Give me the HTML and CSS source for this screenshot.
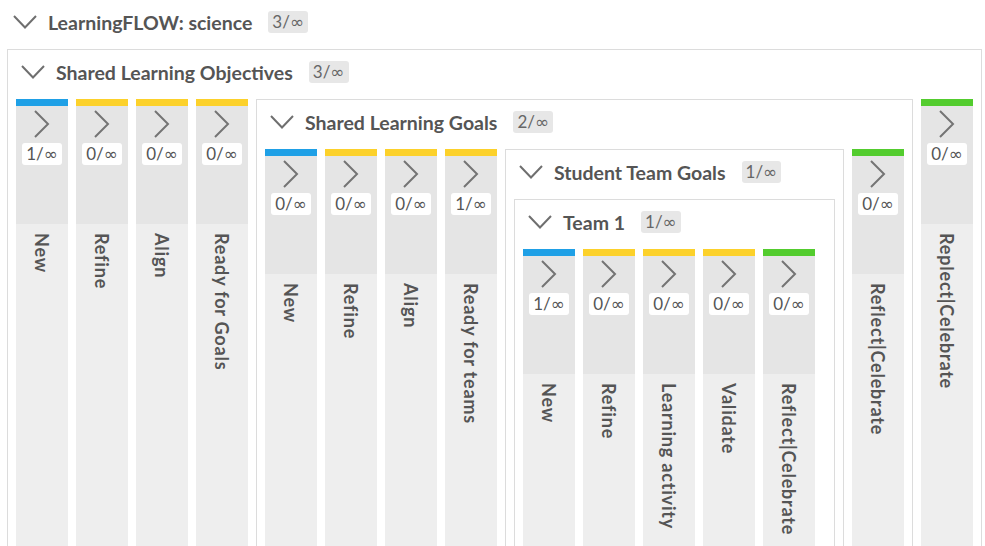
FILE: index.html
```html
<!DOCTYPE html>
<html>
<head>
<meta charset="utf-8">
<link rel="stylesheet" href="styles.css">
</head>
<body>
<div class="hdr top">
  <svg class="down" width="24" height="14" viewBox="0 0 24 14"><polyline points="1,1 12,12.5 23,1"/></svg>
  <span class="title">LearningFLOW: science</span>
  <span class="badge">3/<span class="inf">∞</span></span>
</div>
<div class="box outer">
  <div class="hdr">
    <svg class="down" width="24" height="14" viewBox="0 0 24 14"><polyline points="1,1 12,12.5 23,1"/></svg>
    <span class="title">Shared Learning Objectives</span>
    <span class="badge">3/<span class="inf">∞</span></span>
  </div>
  <div class="row">
    <div class="col"><div class="bar blue"></div><div class="col-top"><svg class="right" width="16" height="28" viewBox="0 0 16 28"><polyline points="1,1 14,14 1,27"/></svg><span class="cbadge">1/<span class="inf">∞</span></span></div><div class="col-label">New</div></div>
    <div class="col"><div class="bar yellow"></div><div class="col-top"><svg class="right" width="16" height="28" viewBox="0 0 16 28"><polyline points="1,1 14,14 1,27"/></svg><span class="cbadge">0/<span class="inf">∞</span></span></div><div class="col-label">Refine</div></div>
    <div class="col"><div class="bar yellow"></div><div class="col-top"><svg class="right" width="16" height="28" viewBox="0 0 16 28"><polyline points="1,1 14,14 1,27"/></svg><span class="cbadge">0/<span class="inf">∞</span></span></div><div class="col-label">Align</div></div>
    <div class="col"><div class="bar yellow"></div><div class="col-top"><svg class="right" width="16" height="28" viewBox="0 0 16 28"><polyline points="1,1 14,14 1,27"/></svg><span class="cbadge">0/<span class="inf">∞</span></span></div><div class="col-label">Ready for Goals</div></div>
    <div class="box">
      <div class="hdr">
        <svg class="down" width="24" height="14" viewBox="0 0 24 14"><polyline points="1,1 12,12.5 23,1"/></svg>
        <span class="title">Shared Learning Goals</span>
        <span class="badge">2/<span class="inf">∞</span></span>
      </div>
      <div class="row">
        <div class="col"><div class="bar blue"></div><div class="col-top"><svg class="right" width="16" height="28" viewBox="0 0 16 28"><polyline points="1,1 14,14 1,27"/></svg><span class="cbadge">0/<span class="inf">∞</span></span></div><div class="col-label">New</div></div>
        <div class="col"><div class="bar yellow"></div><div class="col-top"><svg class="right" width="16" height="28" viewBox="0 0 16 28"><polyline points="1,1 14,14 1,27"/></svg><span class="cbadge">0/<span class="inf">∞</span></span></div><div class="col-label">Refine</div></div>
        <div class="col"><div class="bar yellow"></div><div class="col-top"><svg class="right" width="16" height="28" viewBox="0 0 16 28"><polyline points="1,1 14,14 1,27"/></svg><span class="cbadge">0/<span class="inf">∞</span></span></div><div class="col-label">Align</div></div>
        <div class="col"><div class="bar yellow"></div><div class="col-top"><svg class="right" width="16" height="28" viewBox="0 0 16 28"><polyline points="1,1 14,14 1,27"/></svg><span class="cbadge">1/<span class="inf">∞</span></span></div><div class="col-label">Ready for teams</div></div>
        <div class="box">
          <div class="hdr">
            <svg class="down" width="24" height="14" viewBox="0 0 24 14"><polyline points="1,1 12,12.5 23,1"/></svg>
            <span class="title">Student Team Goals</span>
            <span class="badge">1/<span class="inf">∞</span></span>
          </div>
          <div class="row">
            <div class="box team">
              <div class="hdr">
                <svg class="down" width="24" height="14" viewBox="0 0 24 14"><polyline points="1,1 12,12.5 23,1"/></svg>
                <span class="title">Team 1</span>
                <span class="badge">1/<span class="inf">∞</span></span>
              </div>
              <div class="row">
                <div class="col"><div class="bar blue"></div><div class="col-top"><svg class="right" width="16" height="28" viewBox="0 0 16 28"><polyline points="1,1 14,14 1,27"/></svg><span class="cbadge">1/<span class="inf">∞</span></span></div><div class="col-label">New</div></div>
                <div class="col"><div class="bar yellow"></div><div class="col-top"><svg class="right" width="16" height="28" viewBox="0 0 16 28"><polyline points="1,1 14,14 1,27"/></svg><span class="cbadge">0/<span class="inf">∞</span></span></div><div class="col-label">Refine</div></div>
                <div class="col"><div class="bar yellow"></div><div class="col-top"><svg class="right" width="16" height="28" viewBox="0 0 16 28"><polyline points="1,1 14,14 1,27"/></svg><span class="cbadge">0/<span class="inf">∞</span></span></div><div class="col-label">Learning activity</div></div>
                <div class="col"><div class="bar yellow"></div><div class="col-top"><svg class="right" width="16" height="28" viewBox="0 0 16 28"><polyline points="1,1 14,14 1,27"/></svg><span class="cbadge">0/<span class="inf">∞</span></span></div><div class="col-label">Validate</div></div>
                <div class="col"><div class="bar green"></div><div class="col-top"><svg class="right" width="16" height="28" viewBox="0 0 16 28"><polyline points="1,1 14,14 1,27"/></svg><span class="cbadge">0/<span class="inf">∞</span></span></div><div class="col-label">Reflect|Celebrate</div></div>
              </div>
            </div>
          </div>
        </div>
        <div class="col"><div class="bar green"></div><div class="col-top"><svg class="right" width="16" height="28" viewBox="0 0 16 28"><polyline points="1,1 14,14 1,27"/></svg><span class="cbadge">0/<span class="inf">∞</span></span></div><div class="col-label">Reflect|Celebrate</div></div>
      </div>
    </div>
    <div class="col"><div class="bar green"></div><div class="col-top"><svg class="right" width="16" height="28" viewBox="0 0 16 28"><polyline points="1,1 14,14 1,27"/></svg><span class="cbadge">0/<span class="inf">∞</span></span></div><div class="col-label">Replect|Celebrate</div></div>
  </div>
</div>
</body>
</html>
```
FILE: styles.css
```css
html, body {
  margin: 0;
  padding: 0;
  overflow: hidden;
  background: #fff;
  height: 100%;
}
body {
  font-family: Lato, "Open Sans", sans-serif;
  color: #555;
}
.hdr {
  display: flex;
  align-items: center;
  height: 22px;
  padding: 11px 0 16px 13px;
}
.down {
  flex: none;
  fill: none;
  stroke: #6f6f6f;
  stroke-width: 2;
}
.title {
  margin-left: 11px;
  font-size: 19.5px;
  font-weight: 700;
  color: #555;
  white-space: nowrap;
}
.badge {
  margin-left: 16px;
  height: 22px;
  line-height: 22px;
  padding: 0 4px;
  background: #e7e7e7;
  border-radius: 3px;
  font-size: 17px;
  color: #666;
  white-space: nowrap;
}
.inf {
  font-family: "DejaVu Sans", sans-serif;
  font-size: 17px;
  font-weight: 400;
}
.box {
  display: flex;
  flex-direction: column;
  border: 1px solid #dcdcdc;
  border-bottom: none;
  background: #fff;
}
.outer {
  display: inline-flex;
  margin-left: 7px;
  min-height: 600px;
}
.row {
  flex: 1;
  display: flex;
  gap: 8px;
  padding: 0 8px;
}
.team {
  padding-right: 11px;
}
.col {
  width: 52px;
  flex: none;
  display: flex;
  flex-direction: column;
}
.bar {
  height: 7px;
}
.blue { background: #1fa0e6; }
.yellow { background: #fcd12b; }
.green { background: #53cc2e; }
.col-top {
  height: 118px;
  background: #e5e5e5;
  display: flex;
  flex-direction: column;
  align-items: center;
  padding-top: 4px;
  box-sizing: border-box;
}
.right {
  fill: none;
  stroke: #747474;
  stroke-width: 2;
}
.cbadge {
  margin-top: 5px;
  width: 40px;
  height: 22px;
  line-height: 22px;
  text-align: center;
  background: #fff;
  border-radius: 3px;
  font-size: 17px;
  color: #555;
  white-space: nowrap;
}
.col-label {
  flex: 1;
  min-height: 330px;
  background: #eeeeee;
  writing-mode: vertical-rl;
  padding-top: 9px;
  font-size: 18px;
  font-weight: 700;
  letter-spacing: 0.8px;
  color: #555;
  display: flex;
  align-items: center;
  white-space: nowrap;
}
```
